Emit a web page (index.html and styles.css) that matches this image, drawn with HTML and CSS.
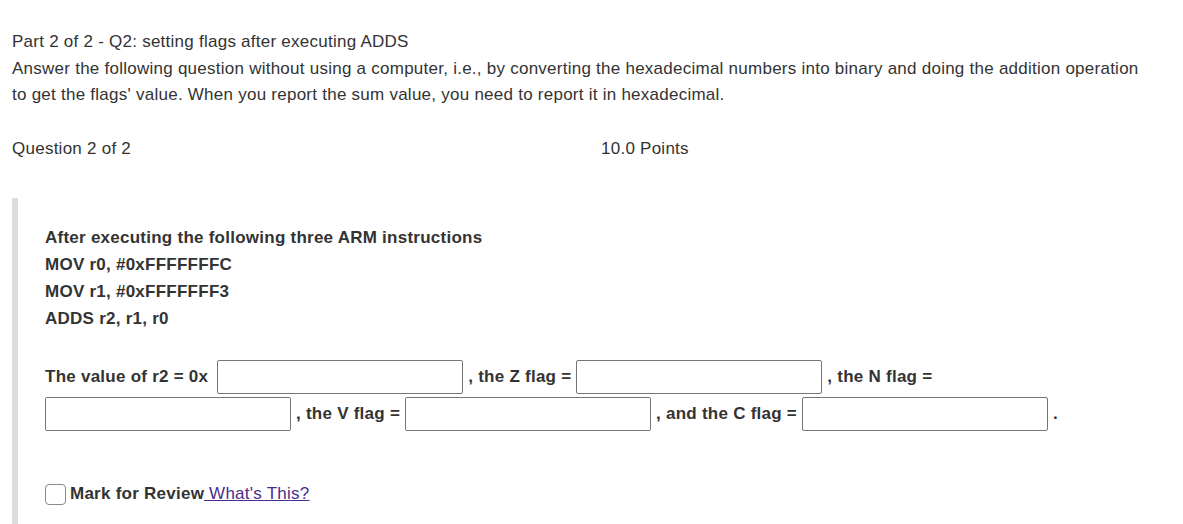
FILE: index.html
```html
<!DOCTYPE html>
<html>
<head>
<meta charset="utf-8">
<link rel="stylesheet" href="styles.css">
</head>
<body>
<div class="page">
  <div class="intro">
    <div>Part 2 of 2 - Q2: setting flags after executing ADDS</div>
    <div>Answer the following question without using a computer, i.e., by converting the hexadecimal numbers into binary and doing the addition operation to get the flags' value. When you report the sum value, you need to report it in hexadecimal.</div>
  </div>
  <div class="meta">
    <div class="meta-label">Question 2 of 2</div>
    <div class="meta-points">10.0 Points</div>
  </div>
  <div class="question">
    <div class="stem">
      <div>After executing the following three ARM instructions</div>
      <div>MOV r0, #0xFFFFFFFC</div>
      <div>MOV r1, #0xFFFFFFF3</div>
      <div>ADDS r2, r1, r0</div>
    </div>
    <div class="answer">The value of r2 = 0x <input class="blank blank-first" type="text"> , the Z flag = <input class="blank" type="text"> , the N flag = <input class="blank" type="text"> , the V flag = <input class="blank" type="text"> , and the C flag = <input class="blank" type="text"> .</div>
    <div class="review">
      <span class="check"></span><span class="review-label">Mark for Review</span><a class="whats" href="#">&nbsp;What's This?</a>
    </div>
  </div>
</div>
</body>
</html>
```
FILE: styles.css
```css
html, body {
  margin: 0;
  padding: 0;
  background: #fff;
}
body {
  font-family: "Liberation Sans", Arial, sans-serif;
  font-size: 17px;
  letter-spacing: 0.25px;
  color: #333;
}
.page {
  padding: 0 30px 0 12px;
}
.intro {
  margin-top: 29px;
  line-height: 26.5px;
}
.meta {
  display: grid;
  grid-template-columns: 589px 1fr;
  margin-top: 29.5px;
  line-height: 22px;
}
.question {
  margin-top: 38px;
  border-left: 6px solid #dddddd;
  padding: 25.5px 0 30px 27px;
  font-weight: bold;
}
.stem {
  line-height: 27px;
}
.answer {
  margin-top: 26px;
  line-height: 37px;
}
.blank {
  box-sizing: border-box;
  width: 246px;
  height: 34px;
  margin: 0;
  padding: 0 6px;
  border: 1px solid #767676;
  border-radius: 2px;
  background: #fff;
  vertical-align: middle;
  font: inherit;
}
.blank-first {
  margin-left: 4px;
}
.review {
  margin-top: 51.5px;
  line-height: 22px;
  display: flex;
  align-items: center;
}
.check {
  box-sizing: border-box;
  width: 21px;
  height: 21px;
  border: 1px solid #8a8a8a;
  border-radius: 4px;
  background: #fff;
  margin-right: 4px;
}
.whats {
  font-weight: normal;
  color: #4b2c8c;
  text-decoration: underline;
}
```
